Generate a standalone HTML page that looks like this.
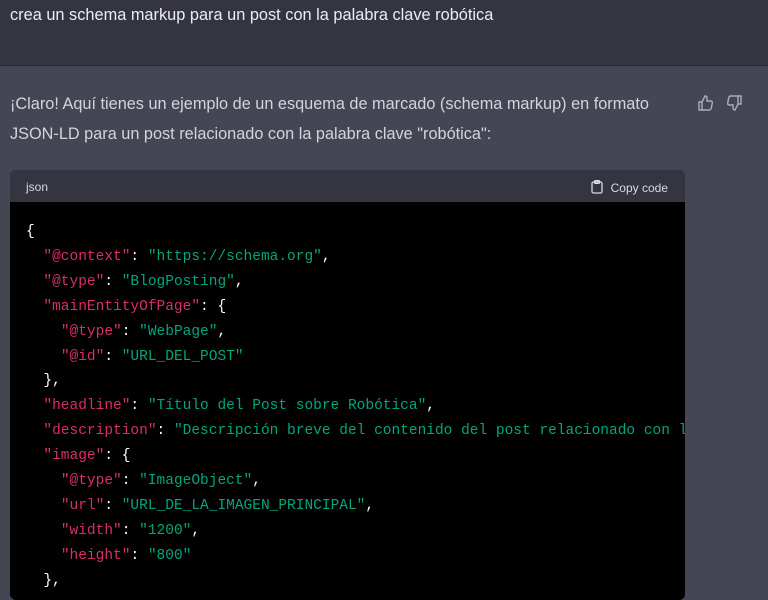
<!DOCTYPE html>
<html><head><meta charset="utf-8"><style>
body{margin:0;width:768px;height:589px;overflow:hidden;background:#444654;font-family:"Liberation Sans",sans-serif;color:#ececf1;position:relative}
.top{position:absolute;left:0;top:0;width:768px;height:65px;background:#343541;border-bottom:1px solid #2a2b32}
.t1{position:absolute;left:10px;top:6px;font-size:16.35px;letter-spacing:0}
.p{position:absolute;left:10px;font-size:16.3px;letter-spacing:0;color:#d1d5db}
.code{position:absolute;left:10px;top:170px;width:675px;height:430px;background:#000;border-radius:6px;overflow:hidden}
.hd{height:32px;background:#343541;font-size:12px;color:#d9d9e3;position:relative}
.hd .l{position:absolute;left:16px;top:10px}
.hd .r{position:absolute;right:17px;top:10px}
pre{margin:0;position:absolute;left:16px;top:50px;font-family:"Liberation Mono",monospace;font-size:14.5px;line-height:24.9px;color:#fff;white-space:pre}
.k{color:#d92d6e}.s{color:#00a67d}
</style></head><body>
<div class="top"><div class="t1">crea un schema markup para un post con la palabra clave robótica</div></div>
<div class="p" style="top:95px">¡Claro! Aquí tienes un ejemplo de un esquema de marcado (schema markup) en formato</div>
<div class="p" style="top:125px">JSON-LD para un post relacionado con la palabra clave "robótica":</div>
<svg style="position:absolute;left:697px;top:94px" width="48" height="18" viewBox="0 0 48 18" fill="none" stroke="#acacbe" stroke-width="1.4"><path d="M2 8h3v8H2zM5 8l3-6c1.5 0 2 1 2 2v3h4c1 0 1.5 1 1.3 2l-1 5c-.2 1-1 2-2 2H5"/><path d="M44 10h-3V2h3zM41 10l-3 6c-1.5 0-2-1-2-2v-3h-4c-1 0-1.5-1-1.3-2l1-5c.2-1 1-2 2-2H41"/></svg>
<div class="code"><div class="hd"><span class="l">json</span><span class="r"><svg width="12" height="14" viewBox="0 0 12 14" fill="none" stroke="#d9d9e3" stroke-width="1.3" style="vertical-align:-2px;margin-right:8px"><rect x="1" y="2" width="10" height="11" rx="1.5"/><rect x="3.5" y="0.7" width="5" height="2.6" rx=".8"/></svg>Copy code</span></div>
<pre>{
  <span class="k">"@context"</span>: <span class="s">"https://schema.org"</span>,
  <span class="k">"@type"</span>: <span class="s">"BlogPosting"</span>,
  <span class="k">"mainEntityOfPage"</span>: {
    <span class="k">"@type"</span>: <span class="s">"WebPage"</span>,
    <span class="k">"@id"</span>: <span class="s">"URL_DEL_POST"</span>
  },
  <span class="k">"headline"</span>: <span class="s">"Título del Post sobre Robótica"</span>,
  <span class="k">"description"</span>: <span class="s">"Descripción breve del contenido del post relacionado con la robótica"</span>,
  <span class="k">"image"</span>: {
    <span class="k">"@type"</span>: <span class="s">"ImageObject"</span>,
    <span class="k">"url"</span>: <span class="s">"URL_DE_LA_IMAGEN_PRINCIPAL"</span>,
    <span class="k">"width"</span>: <span class="s">"1200"</span>,
    <span class="k">"height"</span>: <span class="s">"800"</span>
  },
</pre></div>
</body></html>
